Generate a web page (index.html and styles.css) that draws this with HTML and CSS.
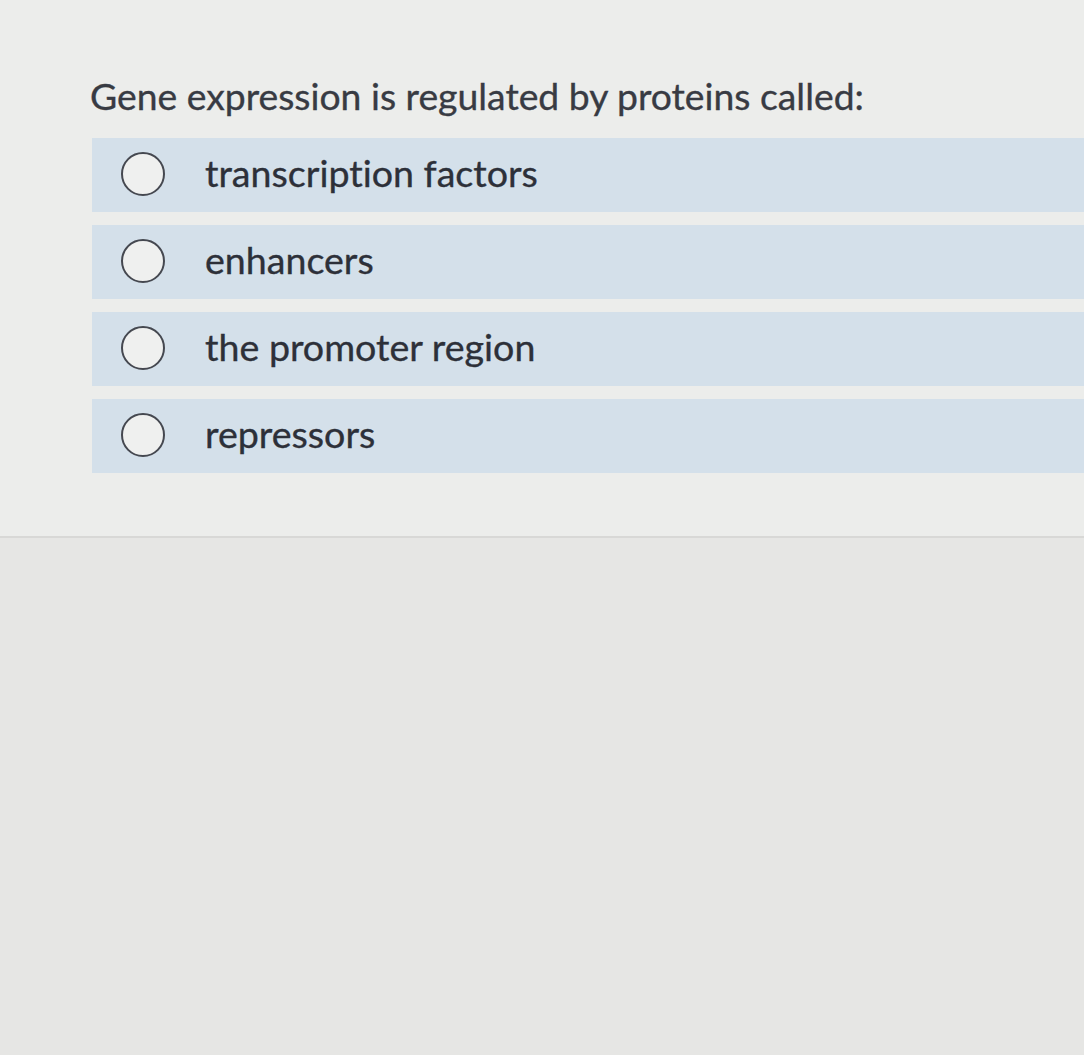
FILE: index.html
```html
<!DOCTYPE html>
<html>
<head>
<meta charset="utf-8">
<link rel="stylesheet" href="styles.css">
</head>
<body>
<div class="card">
  <h1 class="question">Gene expression is regulated by proteins called:</h1>
  <div class="options">
    <label class="option"><span class="radio"></span><span class="text">transcription factors</span></label>
    <label class="option"><span class="radio"></span><span class="text">enhancers</span></label>
    <label class="option"><span class="radio"></span><span class="text">the promoter region</span></label>
    <label class="option"><span class="radio"></span><span class="text">repressors</span></label>
  </div>
</div>
<div class="lower"></div>
</body>
</html>
```
FILE: styles.css
```css
html, body {
  margin: 0;
  padding: 0;
  height: 100%;
}
body {
  background: #e4e4e2;
  font-family: "Lato", "Noto Sans", sans-serif;
  font-variant-ligatures: none;
  color: #33363f;
  display: flex;
  flex-direction: column;
}
.card {
  background: #ecedeb;
  padding: 73px 0 63px 92px;
  border-bottom: 2px solid #d8d8d6;
}
.question {
  margin: 0 0 19px -2px;
  font-size: 37.3px;
  font-weight: 400;
  line-height: 46px;
  color: #383b43;
  -webkit-text-stroke: 0.35px #383b43;
}
.options {
  display: flex;
  flex-direction: column;
  gap: 13px;
}
.option {
  display: flex;
  align-items: center;
  height: 74px;
  background: #d4e0ea;
  padding-left: 29px;
}
.radio {
  width: 44px;
  height: 44px;
  margin-top: -2px;
  border: 2.5px solid #454850;
  border-radius: 50%;
  background: #eff0ef;
  box-sizing: border-box;
  flex: none;
}
.text {
  margin-left: 40px;
  margin-top: -6px;
  font-size: 37.6px;
  color: #2d3039;
  -webkit-text-stroke: 0.35px #2d3039;
}
.lower {
  flex: 1;
  background: #e6e6e4;
}
```
